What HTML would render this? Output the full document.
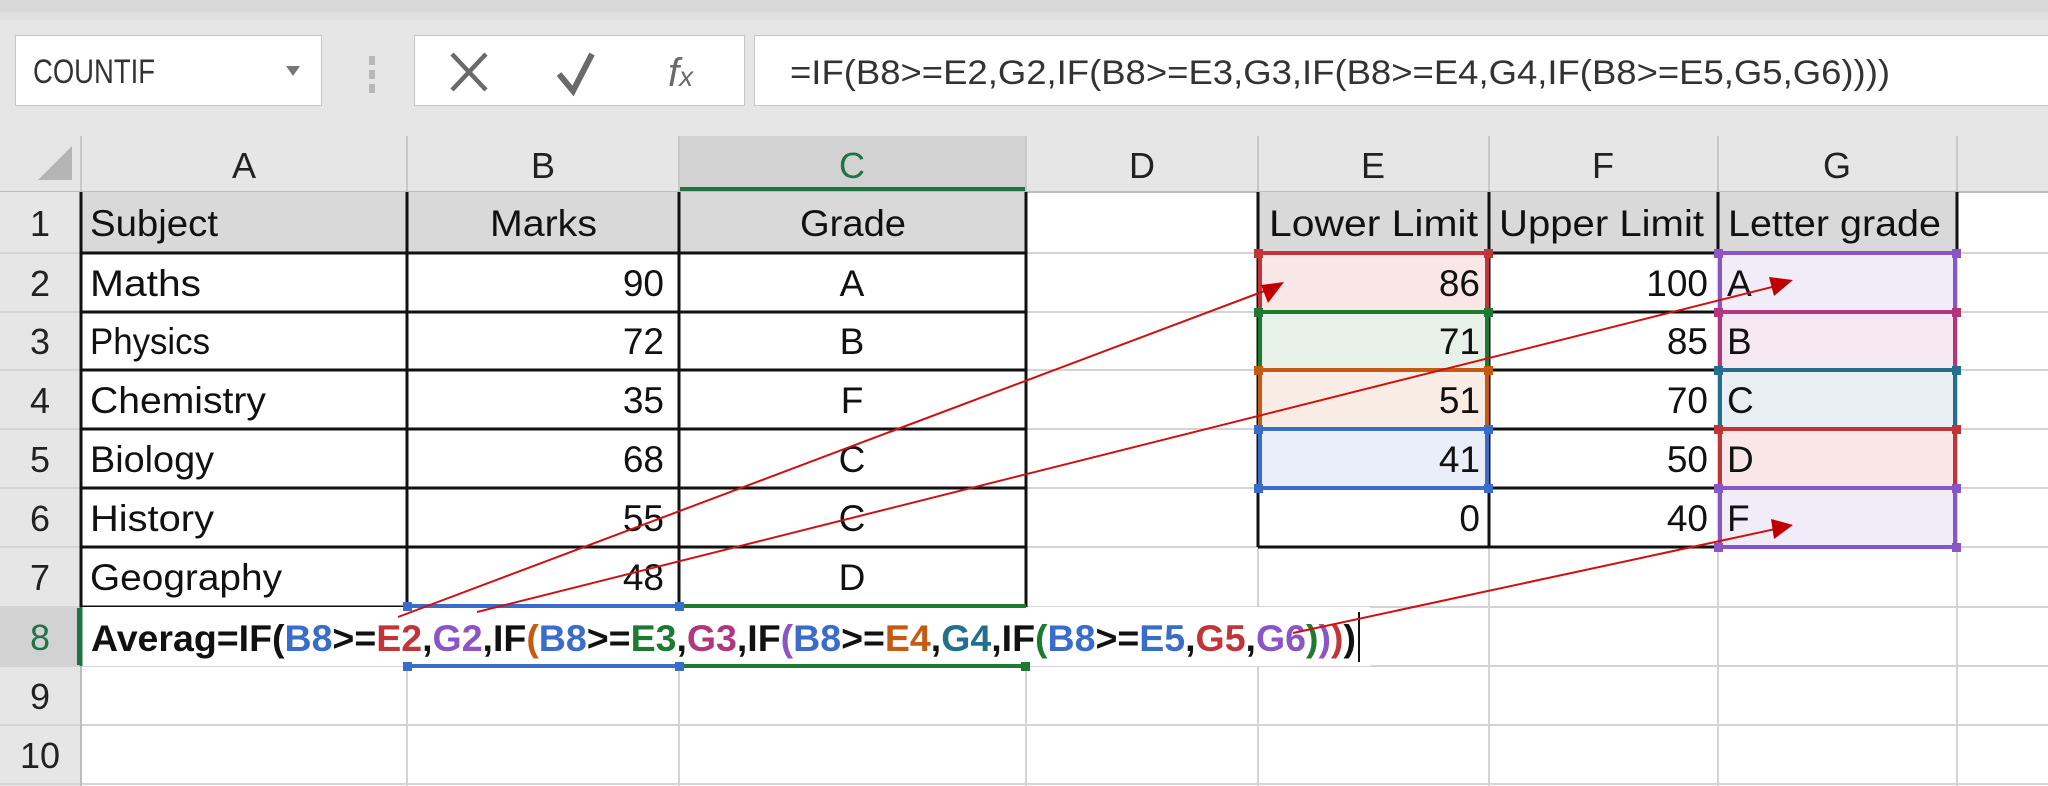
<!DOCTYPE html>
<html><head><meta charset="utf-8"><style>
html,body{margin:0;padding:0;background:#e6e6e6;}
svg{display:block;}
text{font-family:"Liberation Sans Narrow","Liberation Sans",sans-serif;}
</style></head><body>
<svg width="2048" height="786" xmlns="http://www.w3.org/2000/svg">
<rect width="2048" height="786" fill="#e6e6e6"/>
<rect x="0" y="0" width="2048" height="12" fill="#d8d8d8"/>
<rect x="0" y="12" width="2048" height="8" fill="#e0e0e0"/>
<!-- name box -->
<rect x="15.5" y="35.5" width="306" height="70" fill="#fff" stroke="#c6c6c6"/>
<text x="33" y="83" font-size="34" fill="#333" textLength="122" lengthAdjust="spacingAndGlyphs">COUNTIF</text>
<polygon points="286,66 300,66 293,76" fill="#777"/>
<rect x="369" y="56" width="6" height="9" fill="#b8b8b8"/><rect x="369" y="70" width="6" height="9" fill="#b8b8b8"/><rect x="369" y="84" width="6" height="9" fill="#b8b8b8"/>
<rect x="414.5" y="35.5" width="330" height="70" fill="#fff" stroke="#c6c6c6"/>
<path d="M452 54 L486 90 M486 54 L452 90" stroke="#6a6a6a" stroke-width="4.5"/>
<path d="M559 74 L573 91 L592 54" stroke="#6a6a6a" stroke-width="6" fill="none"/>
<text x="668" y="86" font-family="Liberation Serif,serif" font-style="italic" font-size="40" fill="#6a6a6a">f<tspan font-size="28">x</tspan></text>
<rect x="754.5" y="35.5" width="1300" height="70" fill="#fff" stroke="#c6c6c6"/>
<text x="790" y="84" font-size="34" fill="#333" textLength="1100" lengthAdjust="spacingAndGlyphs">=IF(B8&gt;=E2,G2,IF(B8&gt;=E3,G3,IF(B8&gt;=E4,G4,IF(B8&gt;=E5,G5,G6))))</text>

<!-- grid background -->
<rect x="81" y="192" width="1967" height="594" fill="#fff"/>
<!-- column header -->
<rect x="0" y="136" width="2048" height="56" fill="#e6e6e6"/>
<rect x="679" y="136" width="347" height="56" fill="#d2d2d2"/>
<rect x="679" y="187" width="347" height="5" fill="#217346"/>
<polygon points="72,146 72,180 38,180" fill="#b5b5b5"/>
<g stroke="#c8c8c8" stroke-width="2">
<line x1="81" y1="136" x2="81" y2="192"/><line x1="407" y1="136" x2="407" y2="192"/><line x1="679" y1="136" x2="679" y2="192"/><line x1="1026" y1="136" x2="1026" y2="192"/><line x1="1258" y1="136" x2="1258" y2="192"/><line x1="1489" y1="136" x2="1489" y2="192"/><line x1="1718" y1="136" x2="1718" y2="192"/><line x1="1957" y1="136" x2="1957" y2="192"/>
<line x1="0" y1="192" x2="2048" y2="192" stroke="#bdbdbd"/>
</g>
<g font-size="36" fill="#222" text-anchor="middle">
<text x="244" y="178">A</text><text x="543" y="178">B</text><text x="852" y="178" fill="#217346">C</text><text x="1142" y="178">D</text><text x="1373" y="178">E</text><text x="1603" y="178">F</text><text x="1837" y="178">G</text>
</g>
<!-- row header -->
<rect x="0" y="192" width="81" height="594" fill="#e6e6e6"/>
<rect x="0" y="607" width="81" height="59" fill="#d2d2d2"/>
<rect x="77" y="607" width="4" height="59" fill="#217346"/>
<g stroke="#d4d4d4" stroke-width="2">
<line x1="407" y1="192" x2="407" y2="786"/><line x1="679" y1="192" x2="679" y2="786"/><line x1="1026" y1="192" x2="1026" y2="786"/><line x1="1258" y1="192" x2="1258" y2="786"/><line x1="1489" y1="192" x2="1489" y2="786"/><line x1="1718" y1="192" x2="1718" y2="786"/><line x1="1957" y1="192" x2="1957" y2="786"/>
<line x1="0" y1="253" x2="2048" y2="253"/><line x1="0" y1="312" x2="2048" y2="312"/><line x1="0" y1="370" x2="2048" y2="370"/><line x1="0" y1="429" x2="2048" y2="429"/><line x1="0" y1="488" x2="2048" y2="488"/><line x1="0" y1="547" x2="2048" y2="547"/><line x1="0" y1="607" x2="2048" y2="607"/><line x1="0" y1="666" x2="2048" y2="666"/><line x1="0" y1="725" x2="2048" y2="725"/><line x1="0" y1="784" x2="2048" y2="784"/>
<line x1="81" y1="192" x2="81" y2="786" stroke="#bdbdbd"/>
</g>
<g font-size="36" fill="#222" text-anchor="middle">
<text x="40" y="236">1</text><text x="40" y="296">2</text><text x="40" y="354">3</text><text x="40" y="413">4</text><text x="40" y="472">5</text><text x="40" y="531">6</text><text x="40" y="590">7</text><text x="40" y="650" fill="#217346">8</text><text x="40" y="709">9</text><text x="40" y="768">10</text>
</g>
<!-- header fills -->
<rect x="81" y="192" width="945" height="61" fill="#d9d9d9"/>
<rect x="1258" y="192" width="699" height="61" fill="#d9d9d9"/>
<!-- highlight fills -->
<rect x="1258" y="253" width="231" height="59" fill="#f9e7e7"/>
<rect x="1258" y="312" width="231" height="58" fill="#e7f1e8"/>
<rect x="1258" y="370" width="231" height="59" fill="#f9ece4"/>
<rect x="1258" y="429" width="231" height="59" fill="#e9eef8"/>
<rect x="1718" y="253" width="239" height="59" fill="#f0ecf8"/>
<rect x="1718" y="312" width="239" height="58" fill="#f6e8f1"/>
<rect x="1718" y="370" width="239" height="59" fill="#e8eff2"/>
<rect x="1718" y="429" width="239" height="59" fill="#f9e7e7"/>
<rect x="1718" y="488" width="239" height="59" fill="#f0ecf8"/>
<!-- table borders -->
<g stroke="#111" stroke-width="3" fill="none">
<line x1="81" y1="253" x2="1026" y2="253"/><line x1="81" y1="312" x2="1026" y2="312"/><line x1="81" y1="370" x2="1026" y2="370"/><line x1="81" y1="429" x2="1026" y2="429"/><line x1="81" y1="488" x2="1026" y2="488"/><line x1="81" y1="547" x2="1026" y2="547"/><line x1="81" y1="607" x2="407" y2="607"/>
<line x1="81" y1="192" x2="81" y2="607"/><line x1="407" y1="192" x2="407" y2="607"/><line x1="679" y1="192" x2="679" y2="607"/><line x1="1026" y1="192" x2="1026" y2="607"/>
<line x1="1258" y1="192" x2="1258" y2="547"/><line x1="1489" y1="192" x2="1489" y2="547"/><line x1="1718" y1="192" x2="1718" y2="253"/><line x1="1957" y1="192" x2="1957" y2="253"/>
<line x1="1489" y1="253" x2="1718" y2="253"/><line x1="1489" y1="312" x2="1718" y2="312"/><line x1="1489" y1="370" x2="1718" y2="370"/><line x1="1489" y1="429" x2="1718" y2="429"/><line x1="1489" y1="488" x2="1718" y2="488"/><line x1="1258" y1="547" x2="1718" y2="547"/>
</g>
<!-- colored range borders -->
<g stroke-width="4" fill="none">
<rect x="1260" y="253" width="227" height="59" stroke="#c0353a"/>
<rect x="1260" y="312" width="227" height="58" stroke="#1e7a30"/>
<rect x="1260" y="370" width="227" height="59" stroke="#c55a11"/>
<rect x="1260" y="429" width="227" height="59" stroke="#3a6cc9"/>
<rect x="1720" y="253" width="235" height="59" stroke="#8a55c4"/>
<rect x="1720" y="312" width="235" height="58" stroke="#b0377e"/>
<rect x="1720" y="370" width="235" height="59" stroke="#236f8c"/>
<rect x="1720" y="429" width="235" height="59" stroke="#c0353a"/>
<rect x="1720" y="488" width="235" height="59" stroke="#8a55c4"/>
</g>
<g>
<g fill="#c0353a"><rect x="1254" y="249" width="9" height="9"/><rect x="1484" y="249" width="9" height="9"/></g>
<g fill="#1e7a30"><rect x="1254" y="308" width="9" height="9"/><rect x="1484" y="308" width="9" height="9"/></g>
<g fill="#c55a11"><rect x="1254" y="366" width="9" height="9"/><rect x="1484" y="366" width="9" height="9"/></g>
<g fill="#3a6cc9"><rect x="1254" y="425" width="9" height="9"/><rect x="1484" y="425" width="9" height="9"/><rect x="1254" y="484" width="9" height="9"/><rect x="1484" y="484" width="9" height="9"/></g>
<g fill="#8a55c4"><rect x="1714" y="249" width="9" height="9"/><rect x="1952" y="249" width="9" height="9"/><rect x="1714" y="484" width="9" height="9"/><rect x="1952" y="484" width="9" height="9"/><rect x="1714" y="543" width="9" height="9"/><rect x="1952" y="543" width="9" height="9"/></g>
<g fill="#b0377e"><rect x="1714" y="308" width="9" height="9"/><rect x="1952" y="308" width="9" height="9"/></g>
<g fill="#236f8c"><rect x="1714" y="366" width="9" height="9"/><rect x="1952" y="366" width="9" height="9"/></g>
<g fill="#c0353a"><rect x="1714" y="425" width="9" height="9"/><rect x="1952" y="425" width="9" height="9"/></g>
</g>
<!-- cell text -->
<g font-size="37" fill="#111">
<text x="90" y="236" textLength="128" lengthAdjust="spacingAndGlyphs">Subject</text>
<text x="490" y="236" textLength="107" lengthAdjust="spacingAndGlyphs">Marks</text>
<text x="800" y="236" textLength="106" lengthAdjust="spacingAndGlyphs">Grade</text>
<text x="1269" y="236" textLength="209" lengthAdjust="spacingAndGlyphs">Lower Limit</text>
<text x="1499" y="236" textLength="205" lengthAdjust="spacingAndGlyphs">Upper Limit</text>
<text x="1728" y="236" textLength="213" lengthAdjust="spacingAndGlyphs">Letter grade</text>
<text x="90" y="296" textLength="111" lengthAdjust="spacingAndGlyphs">Maths</text>
<text x="90" y="354" textLength="120" lengthAdjust="spacingAndGlyphs">Physics</text>
<text x="90" y="413" textLength="176" lengthAdjust="spacingAndGlyphs">Chemistry</text>
<text x="90" y="472" textLength="124" lengthAdjust="spacingAndGlyphs">Biology</text>
<text x="90" y="531" textLength="124" lengthAdjust="spacingAndGlyphs">History</text>
<text x="90" y="590" textLength="192" lengthAdjust="spacingAndGlyphs">Geography</text>
<g text-anchor="end"><text x="664" y="296">90</text><text x="664" y="354">72</text><text x="664" y="413">35</text><text x="664" y="472">68</text><text x="664" y="531">55</text><text x="664" y="590">48</text>
<text x="1480" y="296">86</text><text x="1480" y="354">71</text><text x="1480" y="413">51</text><text x="1480" y="472">41</text><text x="1480" y="531">0</text>
<text x="1708" y="296">100</text><text x="1708" y="354">85</text><text x="1708" y="413">70</text><text x="1708" y="472">50</text><text x="1708" y="531">40</text></g>
<g text-anchor="middle"><text x="852" y="296">A</text><text x="852" y="354">B</text><text x="852" y="413">F</text><text x="852" y="472">C</text><text x="852" y="531">C</text><text x="852" y="590">D</text></g>
<text x="1727" y="296">A</text><text x="1727" y="354">B</text><text x="1727" y="413">C</text><text x="1727" y="472">D</text><text x="1727" y="531">F</text>
</g>
<!-- active cell row 8 -->
<rect x="80" y="607" width="1290" height="59" fill="#fff"/>
<g stroke-width="4" fill="none">
<line x1="407" y1="606" x2="679" y2="606" stroke="#3a6cc9"/><line x1="407" y1="666" x2="679" y2="666" stroke="#3a6cc9"/>
<line x1="679" y1="606" x2="1026" y2="606" stroke="#1e7a30"/><line x1="679" y1="666" x2="1026" y2="666" stroke="#1e7a30"/>
</g>
<g fill="#3a6cc9"><rect x="403" y="602" width="9" height="9"/><rect x="675" y="602" width="9" height="9"/><rect x="403" y="662" width="9" height="9"/><rect x="675" y="662" width="9" height="9"/></g>
<rect x="1021" y="662" width="9" height="9" fill="#1e7a30"/>
<line x1="81" y1="607" x2="81" y2="666" stroke="#217346" stroke-width="3"/>
<text x="91" y="651" font-size="37" font-weight="bold" fill="#111" textLength="1265" lengthAdjust="spacingAndGlyphs">Averag=IF<tspan fill="#111">(</tspan><tspan fill="#3a6cc9">B8</tspan>&gt;=<tspan fill="#c0353a">E2</tspan>,<tspan fill="#8a55c4">G2</tspan>,IF<tspan fill="#c55a11">(</tspan><tspan fill="#3a6cc9">B8</tspan>&gt;=<tspan fill="#1e7a30">E3</tspan>,<tspan fill="#b0377e">G3</tspan>,IF<tspan fill="#8a55c4">(</tspan><tspan fill="#3a6cc9">B8</tspan>&gt;=<tspan fill="#c55a11">E4</tspan>,<tspan fill="#236f8c">G4</tspan>,IF<tspan fill="#1e7a30">(</tspan><tspan fill="#3a6cc9">B8</tspan>&gt;=<tspan fill="#3a6cc9">E5</tspan>,<tspan fill="#c0353a">G5</tspan>,<tspan fill="#8a55c4">G6</tspan><tspan fill="#1e7a30">)</tspan><tspan fill="#8a55c4">)</tspan><tspan fill="#c0353a">)</tspan>)</text>
<line x1="1359" y1="612" x2="1359" y2="662" stroke="#111" stroke-width="2"/>
<!-- arrows -->
<g stroke="#d01010" stroke-width="2">
<line x1="398" y1="617" x2="1275" y2="287"/>
<line x1="477" y1="612" x2="1780" y2="285"/>
<line x1="1293" y1="633" x2="1780" y2="528"/>
</g>
<g fill="#c00000">
<polygon points="1284,282 1268,303 1261,285"/>
<polygon points="1793,280 1774,296 1769,277"/>
<polygon points="1793,525 1774,539 1771,519"/>
</g>
</svg>
</body></html>
